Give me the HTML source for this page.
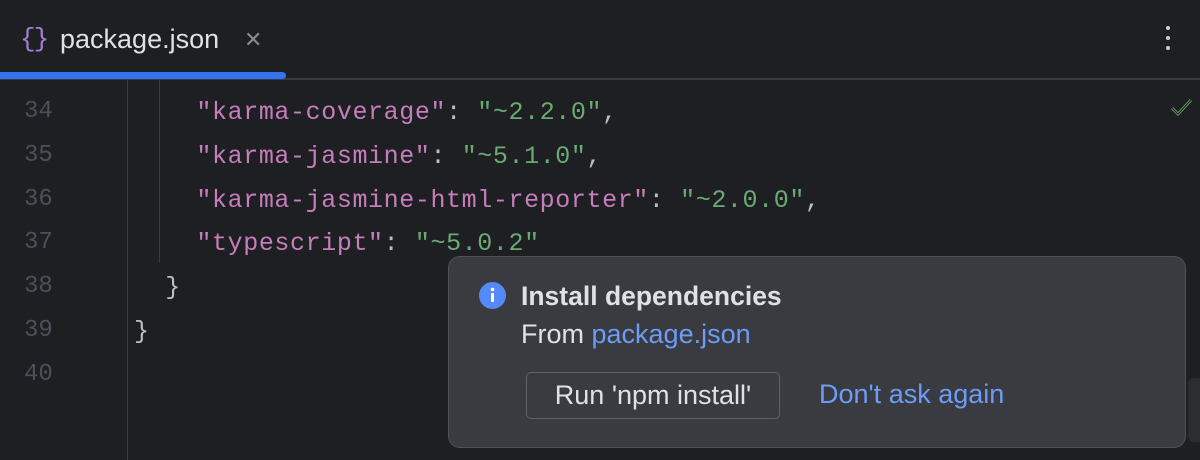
<!DOCTYPE html>
<html><head><meta charset="utf-8"><style>
body{margin:0;width:1200px;height:460px;background:#1e1f22;overflow:hidden;position:relative;font-family:"Liberation Sans",sans-serif}
.tabbar{position:absolute;left:0;top:0;width:1200px;height:78px;background:#1e1f22;border-bottom:2px solid #393b40}
.tabul{position:absolute;left:0;top:72px;width:286px;height:7px;background:#3574f0;border-radius:0 4px 4px 0}
.tab{position:absolute;left:60px;top:24px;font-size:27px;color:#dfe1e5}
.brace{position:absolute;left:20px;top:24px;font-size:26px;color:#a17fd8;font-family:"Liberation Mono",monospace;letter-spacing:-2px}
.x{position:absolute;left:244px;top:27px;font-size:22px;color:#868a91}
.dots{position:absolute;left:1166px;top:26px}
.dots i{display:block;width:4px;height:4px;border-radius:50%;background:#ced0d6;margin-bottom:6px}
.ln{position:absolute;left:24px;font-family:"Liberation Mono",monospace;font-size:24px;color:#4b5059;line-height:43.8px}
.gut{position:absolute;left:127px;top:80px;width:1px;height:380px;background:#393b40}
.guide{position:absolute;left:159px;top:80px;width:1px;height:183px;background:#393b40}
.code{position:absolute;left:134px;top:91px;font-family:"Liberation Mono",monospace;font-size:25px;letter-spacing:0.6px;line-height:43.8px;color:#bcbec4;white-space:pre}
.k{color:#c77dbb}.s{color:#6aab73}
.pop{position:absolute;left:448px;top:256px;width:738px;height:192px;background:#393b40;border:1px solid #4e5157;border-radius:12px;box-sizing:border-box}
.info{position:absolute;left:479px;top:282px;width:27px;height:27px;border-radius:50%;background:#548af7}
.title{position:absolute;left:521px;top:281px;font-size:26.5px;font-weight:bold;color:#dfe1e5}
.from{position:absolute;left:521px;top:319px;font-size:27px;color:#dfe1e5}
.from span{color:#6c9cf5}
.btn{position:absolute;left:526px;top:372px;width:254px;height:47px;border:1px solid #5f6268;border-radius:5px;box-sizing:border-box;color:#dfe1e5;font-size:27px;text-align:center;line-height:44px}
.link{position:absolute;left:819px;top:379px;font-size:27px;color:#6c9cf5}
.sb{position:absolute;left:1188px;top:378px;width:12px;height:64px;background:#2b2d30;border-radius:6px 0 0 6px}
</style></head><body>
<div class="tabbar"></div>
<div class="tabul"></div>
<div class="brace">{}</div>
<div class="tab">package.json</div>
<div class="x">✕</div>
<div class="dots"><i></i><i></i><i></i></div>
<svg style="position:absolute;left:1170px;top:96px" width="24" height="22" viewBox="0 0 24 22"><path d="M2 12 L8 18 L21 4" fill="none" stroke="#5f9a5c" stroke-width="3"/><path d="M2 12 L8 18 L21 4" fill="none" stroke="#1e1f22" stroke-width="1"/></svg>
<div class="gut"></div><div class="guide"></div>
<div class="ln" style="top:90px">34<br>35<br>36<br>37<br>38<br>39<br>40</div>
<div class="code">    <span class="k">"karma-coverage"</span>: <span class="s">"~2.2.0"</span>,
    <span class="k">"karma-jasmine"</span>: <span class="s">"~5.1.0"</span>,
    <span class="k">"karma-jasmine-html-reporter"</span>: <span class="s">"~2.0.0"</span>,
    <span class="k">"typescript"</span>: <span class="s">"~5.0.2"</span>
  }
}</div>
<div class="sb"></div>
<div class="pop"></div>
<div class="info"><svg width="27" height="27"><rect x="12" y="11" width="3" height="9" rx="1" fill="#fff"/><circle cx="13.5" cy="7.5" r="1.8" fill="#fff"/></svg></div>
<div class="title">Install dependencies</div>
<div class="from">From <span>package.json</span></div>
<div class="btn">Run 'npm install'</div>
<div class="link">Don't ask again</div>
</body></html>
